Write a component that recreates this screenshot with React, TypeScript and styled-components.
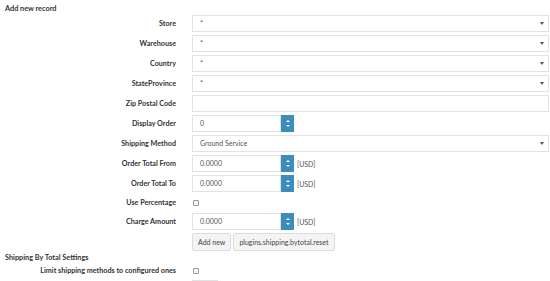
import React from "react";
import styled, { createGlobalStyle } from "styled-components";

const Global = createGlobalStyle`
  html, body { margin: 0; padding: 0; background: #fff; }
  body { font-family: Lato, "Liberation Sans", sans-serif; color: #333; }
  * { box-sizing: border-box; }
`;

const Page = styled.div`
  width: 550px;
  height: 281px;
  overflow: hidden;
  padding: 4px 1px 0 5px;
`;

const SectionTitle = styled.div<{ $top?: number }>`
  font-weight: 700;
  font-size: 7.3px;
  line-height: 10px;
  height: 10px;
  margin-top: ${(p) => p.$top ?? 0}px;
`;

const Form = styled.div`
  display: grid;
  grid-template-columns: 171px 1fr;
  column-gap: 16px;
  row-gap: 3px;
  margin-top: 1px;
`;

const Label = styled.div<{ $h?: number }>`
  font-weight: 700;
  font-size: 7.2px;
  text-align: right;
  height: ${(p) => p.$h ?? 17}px;
  line-height: ${(p) => p.$h ?? 17}px;
  white-space: nowrap;
`;

const Control = styled.div<{ $h?: number }>`
  display: flex;
  align-items: center;
  gap: 3px;
  height: ${(p) => p.$h ?? 17}px;
  min-width: 0;
`;

const Box = styled.div<{ $w?: number }>`
  position: relative;
  height: 17px;
  width: ${(p) => (p.$w ? `${p.$w}px` : "100%")};
  border: 1px solid #e2e2e2;
  background: #fff;
  font-size: 7px;
  color: #555;
  line-height: 15px;
  padding-left: 7px;
  flex-shrink: 0;
`;

const Arrow = styled.span`
  position: absolute;
  right: 4px;
  top: 6px;
  width: 0;
  height: 0;
  border-left: 2px solid transparent;
  border-right: 2px solid transparent;
  border-top: 3px solid #555;
`;

const Spinner = styled.div`
  width: 13px;
  height: 17px;
  background: #3c8dbc;
  display: flex;
  flex-direction: column;
  align-items: center;
  justify-content: space-around;
  padding: 3px 0;
  margin-left: -3px;
  flex-shrink: 0;
`;

const Tri = styled.span<{ $up?: boolean }>`
  width: 0;
  height: 0;
  border-left: 2px solid transparent;
  border-right: 2px solid transparent;
  ${(p) => (p.$up ? "border-bottom: 2px solid #fff;" : "border-top: 2px solid #fff;")}
`;

const Unit = styled.span`
  font-size: 7px;
  color: #555;
`;

const Check = styled.span`
  width: 6px;
  height: 6px;
  border: 1px solid #999;
  border-radius: 1px;
  background: #f8f8f8;
  margin-left: 1px;
`;

const Button = styled.div`
  height: 18px;
  padding: 0 5px;
  background: #f4f4f4;
  border: 1px solid #ddd;
  border-radius: 2px;
  font-size: 7px;
  color: #444;
  line-height: 16px;
  white-space: nowrap;
`;

const Buttons = styled.div`
  display: flex;
  gap: 2px;
  height: 18px;
`;

const Select = ({ value }: { value: string }) => (
  <Box>
    {value}
    <Arrow />
  </Box>
);

const Numeric = ({ value, unit }: { value: string; unit?: boolean }) => (
  <>
    <Box $w={89}>{value}</Box>
    <Spinner>
      <Tri $up />
      <Tri />
    </Spinner>
    {unit && <Unit>[USD]</Unit>}
  </>
);

export default function App() {
  return (
    <Page>
      <Global />
      <SectionTitle>Add new record</SectionTitle>
      <Form>
        <Label>Store</Label>
        <Control><Select value="*" /></Control>
        <Label>Warehouse</Label>
        <Control><Select value="*" /></Control>
        <Label>Country</Label>
        <Control><Select value="*" /></Control>
        <Label>StateProvince</Label>
        <Control><Select value="*" /></Control>
        <Label>Zip Postal Code</Label>
        <Control><Box /></Control>
        <Label>Display Order</Label>
        <Control><Numeric value="0" /></Control>
        <Label>Shipping Method</Label>
        <Control><Select value="Ground Service" /></Control>
        <Label>Order Total From</Label>
        <Control><Numeric value="0.0000" unit /></Control>
        <Label>Order Total To</Label>
        <Control><Numeric value="0.0000" unit /></Control>
        <Label $h={15}>Use Percentage</Label>
        <Control $h={15}><Check /></Control>
        <Label>Charge Amount</Label>
        <Control><Numeric value="0.0000" unit /></Control>
        <div />
        <Buttons>
          <Button>Add new</Button>
          <Button>plugins.shipping.bytotal.reset</Button>
        </Buttons>
      </Form>
      <SectionTitle $top={2}>Shipping By Total Settings</SectionTitle>
      <Form>
        <Label $h={13}>Limit shipping methods to configured ones</Label>
        <Control $h={13}><Check /></Control>
        <div />
        <Control><Box $w={26} /></Control>
      </Form>
    </Page>
  );
}
